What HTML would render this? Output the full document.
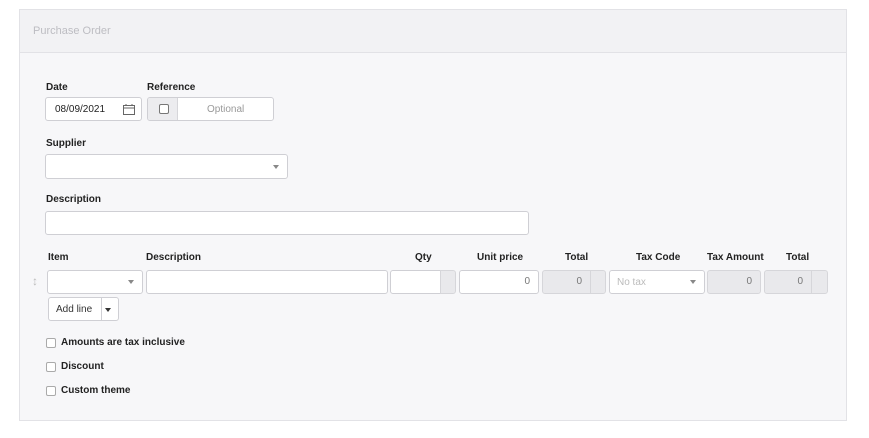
<!DOCTYPE html><html><head><style>
*{box-sizing:border-box;margin:0;padding:0}
body{width:869px;height:438px;background:#fff;font-family:"Liberation Sans",sans-serif;font-size:10px;color:#222;position:relative;overflow:hidden}
.a{position:absolute}
.panel{left:19px;top:9px;width:828px;height:412px;border:1px solid #e2e2e6;background:#f7f7f9}
.hdr{left:20px;top:10px;width:826px;height:43px;background:#f2f2f4;border-bottom:1px solid #e2e2e6}
.lbl{font-weight:bold;font-size:10px;color:#222}
.in{background:#fff;border:1px solid #cfcfd4;border-radius:3px}
.g{background:#e9e9ec;border:1px solid #d6d6da;border-radius:3px}
.r{text-align:right;line-height:22px;color:#777;padding-right:8px}
.car{position:absolute;right:8px;top:9px;width:0;height:0;border-left:3px solid transparent;border-right:3px solid transparent;border-top:4px solid #888}
.cb{width:10px;height:10px;border:1px solid #aaa;border-radius:2px;background:#fff}
</style></head><body>
<div class="a panel"></div>
<div class="a hdr"></div>
<div class="a" style="left:33px;top:25px;font-size:11px;color:#bdbdc2">Purchase Order</div>

<div class="a lbl" style="left:46px;top:82px">Date</div>
<div class="a lbl" style="left:147px;top:82px">Reference</div>
<div class="a in" style="left:45px;top:97px;width:97px;height:24px"><span class="a" style="left:9px;top:6px">08/09/2021</span>
<svg class="a" style="left:77px;top:6px" width="12" height="11" viewBox="0 0 12 11"><rect x="0.5" y="1.5" width="11" height="9" fill="none" stroke="#666"/><line x1="0.5" y1="4" x2="11.5" y2="4" stroke="#666"/><line x1="3" y1="0" x2="3" y2="2" stroke="#666"/><line x1="9" y1="0" x2="9" y2="2" stroke="#666"/></svg></div>
<div class="a in" style="left:147px;top:97px;width:127px;height:24px;overflow:hidden"><div class="a" style="left:0;top:0;width:30px;height:22px;background:#ececef;border-right:1px solid #d6d6da"></div><div class="a cb" style="left:11px;top:6px;border-color:#777"></div><span class="a" style="left:59px;top:6px;color:#999">Optional</span></div>

<div class="a lbl" style="left:46px;top:138px">Supplier</div>
<div class="a in" style="left:45px;top:154px;width:243px;height:25px"><div class="car" style="top:10px"></div></div>
<div class="a lbl" style="left:46px;top:194px">Description</div>
<div class="a in" style="left:45px;top:211px;width:484px;height:24px"></div>

<div class="a lbl" style="left:48px;top:252px">Item</div>
<div class="a lbl" style="left:146px;top:252px">Description</div>
<div class="a lbl" style="left:415px;top:252px">Qty</div>
<div class="a lbl" style="left:477px;top:252px">Unit price</div>
<div class="a lbl" style="left:565px;top:252px">Total</div>
<div class="a lbl" style="left:636px;top:252px">Tax Code</div>
<div class="a lbl" style="left:707px;top:252px">Tax Amount</div>
<div class="a lbl" style="left:786px;top:252px">Total</div>

<div class="a" style="left:32px;top:274px;color:#bbb;font-size:12px">↕</div>
<div class="a in" style="left:47px;top:270px;width:96px;height:24px"><div class="car"></div></div>
<div class="a in" style="left:146px;top:270px;width:242px;height:24px"></div>
<div class="a in" style="left:390px;top:270px;width:51px;height:24px;border-radius:3px 0 0 3px"></div>
<div class="a g" style="left:440px;top:270px;width:16px;height:24px;border-radius:0 3px 3px 0"></div>
<div class="a in r" style="left:459px;top:270px;width:80px;height:24px">0</div>
<div class="a g r" style="left:542px;top:270px;width:49px;height:24px;border-radius:3px 0 0 3px">0</div>
<div class="a g" style="left:590px;top:270px;width:16px;height:24px;border-radius:0 3px 3px 0"></div>
<div class="a in" style="left:609px;top:270px;width:96px;height:24px"><span class="a" style="left:7px;top:6px;color:#bbb">No tax</span><div class="car"></div></div>
<div class="a g r" style="left:707px;top:270px;width:54px;height:24px">0</div>
<div class="a g r" style="left:764px;top:270px;width:48px;height:24px;border-radius:3px 0 0 3px">0</div>
<div class="a g" style="left:811px;top:270px;width:17px;height:24px;border-radius:0 3px 3px 0"></div>

<div class="a in" style="left:48px;top:297px;width:71px;height:24px"><span class="a" style="left:7px;top:6px;color:#333">Add line</span><div class="a" style="left:52px;top:0;width:1px;height:22px;background:#cfcfd4"></div><div class="car" style="right:7px;top:10px;border-top-color:#333"></div></div>

<div class="a cb" style="left:46px;top:338px"></div><div class="a lbl" style="left:61px;top:337px">Amounts are tax inclusive</div>
<div class="a cb" style="left:46px;top:362px"></div><div class="a lbl" style="left:61px;top:361px">Discount</div>
<div class="a cb" style="left:46px;top:386px"></div><div class="a lbl" style="left:61px;top:385px">Custom theme</div>
</body></html>
